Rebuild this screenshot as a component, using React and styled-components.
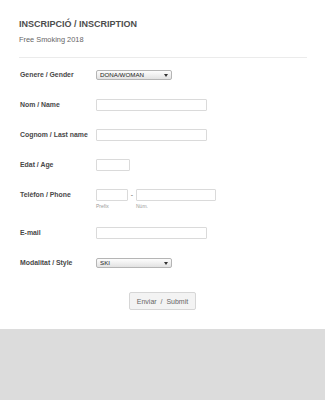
import React from 'react';
import styled, { createGlobalStyle } from 'styled-components';

const GlobalStyle = createGlobalStyle`
  html, body {
    margin: 0;
    padding: 0;
    background: #dcdcdc;
    font-family: "Liberation Sans", Arial, sans-serif;
    -webkit-font-smoothing: antialiased;
  }
`;

const Card = styled.form`
  background: #fff;
  padding: 18px 18px 19px 19px;
  box-shadow: 0 3px 0 #cdcdcd;
`;

const Title = styled.h1`
  margin: 0;
  font-size: 9px;
  line-height: 12px;
  font-weight: 700;
  color: #4d4d4d;
`;

const Subtitle = styled.p`
  margin: 5px 0 0;
  font-size: 7.4px;
  line-height: 10px;
  color: #666;
`;

const Divider = styled.hr`
  margin: 12px 0 2px;
  border: 0;
  border-top: 1px solid #ebebeb;
`;

const Row = styled.div`
  display: grid;
  grid-template-columns: 77px 1fr;
  align-items: start;
  padding: 9px 0;
`;

const Label = styled.label`
  padding-left: 1px;
  font-size: 6.9px;
  line-height: 12px;
  font-weight: 700;
  color: #484848;
  white-space: nowrap;
`;

const Field = styled.div`
  display: flex;
  align-items: flex-start;
  min-height: 12px;
`;

const Input = styled.input`
  display: block;
  box-sizing: border-box;
  width: ${({ $w }) => $w}px;
  height: 12px;
  margin: 0;
  padding: 0 2px;
  border: 1px solid #dadada;
  border-radius: 1px;
  background: #fff;
  font: inherit;
  font-size: 6px;
`;

const SelectWrap = styled.div`
  position: relative;
  margin-top: 1px;
  width: 76px;
  height: 10px;
`;

const Select = styled.select`
  display: block;
  box-sizing: border-box;
  appearance: none;
  width: 100%;
  height: 100%;
  margin: 0;
  padding: 0 0 0 3px;
  border: 1px solid #b5b5b5;
  border-radius: 2px;
  background: linear-gradient(#fdfdfd, #e2e2e2);
  font-family: "Liberation Sans", Arial, sans-serif;
  font-size: 6.2px;
  line-height: 8px;
  color: #1a1a1a;
`;

const Arrow = styled.span`
  position: absolute;
  right: 4px;
  top: 3.5px;
  width: 0;
  height: 0;
  border-left: 2px solid transparent;
  border-right: 2px solid transparent;
  border-top: 3px solid #333;
  pointer-events: none;
`;

const Part = styled.div`
  display: flex;
  flex-direction: column;
`;

const Sub = styled.span`
  margin-top: 2px;
  font-size: 5px;
  line-height: 6px;
  color: #9a9a9a;
`;

const Dash = styled.span`
  width: 8px;
  text-align: center;
  font-size: 7px;
  line-height: 12px;
  color: #666;
`;

const Actions = styled.div`
  display: flex;
  justify-content: center;
  padding-top: 14px;
  padding-right: 1px;
`;

const Button = styled.button`
  box-sizing: border-box;
  width: 67px;
  height: 18px;
  padding: 0;
  border: 1px solid #d6d6d6;
  border-radius: 2px;
  background: #f3f3f3;
  font-family: "Liberation Sans", Arial, sans-serif;
  font-size: 7px;
  color: #666;
  white-space: pre;
`;

const Dropdown = ({ value }) => (
  <SelectWrap>
    <Select defaultValue={value}>
      <option>{value}</option>
    </Select>
    <Arrow />
  </SelectWrap>
);

export default function App() {
  return (
    <>
      <GlobalStyle />
      <Card onSubmit={(e) => e.preventDefault()}>
        <Title>INSCRIPCIÓ / INSCRIPTION</Title>
        <Subtitle>Free Smoking 2018</Subtitle>
        <Divider />

        <Row>
          <Label>Genere / Gender</Label>
          <Field><Dropdown value="DONA/WOMAN" /></Field>
        </Row>
        <Row>
          <Label>Nom / Name</Label>
          <Field><Input $w={111} /></Field>
        </Row>
        <Row>
          <Label>Cognom / Last name</Label>
          <Field><Input $w={111} /></Field>
        </Row>
        <Row>
          <Label>Edat / Age</Label>
          <Field><Input $w={34} /></Field>
        </Row>
        <Row>
          <Label>Telèfon / Phone</Label>
          <Field>
            <Part>
              <Input $w={32} />
              <Sub>Prefix</Sub>
            </Part>
            <Dash>-</Dash>
            <Part>
              <Input $w={80} />
              <Sub>Núm.</Sub>
            </Part>
          </Field>
        </Row>
        <Row>
          <Label>E-mail</Label>
          <Field><Input $w={111} /></Field>
        </Row>
        <Row>
          <Label>Modalitat / Style</Label>
          <Field><Dropdown value="SKI" /></Field>
        </Row>

        <Actions>
          <Button type="submit">{'Enviar  /  Submit'}</Button>
        </Actions>
      </Card>
    </>
  );
}
